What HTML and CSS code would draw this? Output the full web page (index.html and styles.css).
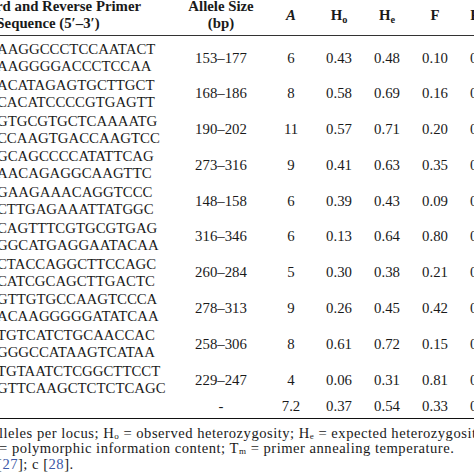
FILE: index.html
```html
<!DOCTYPE html>
<html lang="en">
<head>
<meta charset="utf-8">
<title>Microsatellite loci table</title>
<link rel="stylesheet" href="styles.css">
</head>
<body>
<div class="page">
  <div class="shift">
    <table class="tbl">
      <colgroup>
        <col class="c-seq"><col class="c-size"><col class="c-num"><col class="c-num"><col class="c-num"><col class="c-num"><col class="c-num">
      </colgroup>
      <thead>
        <tr>
          <th>Forward and Reverse Primer<br>Sequence (5′–3′)</th>
          <th>Allele Size<br>(bp)</th>
          <th><i>A</i></th>
          <th>H<sub>o</sub></th>
          <th>H<sub>e</sub></th>
          <th>F</th>
          <th>PIC</th>
        </tr>
      </thead>
      <tbody>
        <tr class="first">
          <td class="seq">AAGGCCCTCCAATACT<br>AAGGGGACCCTCCAA</td>
          <td>153–177</td><td>6</td><td>0.43</td><td>0.48</td><td>0.10</td><td>0.42</td>
        </tr>
        <tr>
          <td class="seq">ACATAGAGTGCTTGCT<br>CACATCCCCGTGAGTT</td>
          <td>168–186</td><td>8</td><td>0.58</td><td>0.69</td><td>0.16</td><td>0.64</td>
        </tr>
        <tr>
          <td class="seq">GTGCGTGCTCAAAATG<br>CCAAGTGACCAAGTCC</td>
          <td>190–202</td><td>11</td><td>0.57</td><td>0.71</td><td>0.20</td><td>0.67</td>
        </tr>
        <tr>
          <td class="seq">GCAGCCCCATATTCAG<br>AACAGAGGCAAGTTC</td>
          <td>273–316</td><td>9</td><td>0.41</td><td>0.63</td><td>0.35</td><td>0.58</td>
        </tr>
        <tr>
          <td class="seq">GAAGAAACAGGTCCC<br>CTTGAGAAATTATGGC</td>
          <td>148–158</td><td>6</td><td>0.39</td><td>0.43</td><td>0.09</td><td>0.39</td>
        </tr>
        <tr>
          <td class="seq">CAGTTTCGTGCGTGAG<br>GGCATGAGGAATACAA</td>
          <td>316–346</td><td>6</td><td>0.13</td><td>0.64</td><td>0.80</td><td>0.58</td>
        </tr>
        <tr>
          <td class="seq">CTACCAGGCTTCCAGC<br>CATCGCAGCTTGACTC</td>
          <td>260–284</td><td>5</td><td>0.30</td><td>0.38</td><td>0.21</td><td>0.35</td>
        </tr>
        <tr>
          <td class="seq">GTTGTGCCAAGTCCCA<br>ACAAGGGGGATATCAA</td>
          <td>278–313</td><td>9</td><td>0.26</td><td>0.45</td><td>0.42</td><td>0.43</td>
        </tr>
        <tr>
          <td class="seq">TGTCATCTGCAACCAC<br>GGGCCATAAGTCATAA</td>
          <td>258–306</td><td>8</td><td>0.61</td><td>0.72</td><td>0.15</td><td>0.68</td>
        </tr>
        <tr>
          <td class="seq">TGTAATCTCGGCTTCCT<br>GTTCAAGCTCTCTCAGC</td>
          <td>229–247</td><td>4</td><td>0.06</td><td>0.31</td><td>0.81</td><td>0.29</td>
        </tr>
        <tr class="mean">
          <td class="seq"></td>
          <td>-</td><td>7.2</td><td>0.37</td><td>0.54</td><td>0.33</td><td>0.50</td>
        </tr>
      </tbody>
    </table>
  </div>
  <div class="notes">
    <div class="ln l1">alleles per locus; H<sub class="fs">o</sub> = observed heterozygosity; H<sub class="fs">e</sub> = expected heterozygosity;</div>
    <div class="ln l2">= polymorphic information content; T<sub class="fs">m</sub> = primer annealing temperature.</div>
    <div class="ln l3">[<a class="ref" href="#r27">27</a>]; c [<a class="ref" href="#r28">28</a>].</div>
  </div>
</div>
</body>
</html>
```
FILE: styles.css
```css
html, body {
  margin: 0;
  padding: 0;
  background: #ffffff;
}
body {
  width: 474px;
  height: 474px;
  overflow: hidden;
}
.page {
  width: 474px;
  height: 474px;
  overflow: hidden;
  font-family: "Liberation Serif", "Times New Roman", serif;
  color: #1a1a1a;
}
.shift {
  margin-left: -79px;
  margin-top: -2px;
  width: 600px;
}
.tbl {
  border-collapse: collapse;
  table-layout: fixed;
  width: 586px;
  font-size: 14.8px;
}
.c-seq { width: 254px; }
.c-size { width: 92px; }
.c-num { width: 48px; }

.tbl th {
  font-weight: bold;
  line-height: 17px;
  padding: 0 0 3px;
  text-align: center;
  vertical-align: middle;
  white-space: nowrap;
  border-bottom: 1.5px solid #333333;
}
.tbl td {
  line-height: 17px;
  padding: 0.9px 0;
  text-align: center;
  vertical-align: middle;
  white-space: nowrap;
}
.tbl td.seq {
  text-align: left;
  padding-left: 76px;
}
.tbl tr.first td {
  padding-top: 5px;
}
.tbl tr.mean td {
  padding: 0 0 3px;
  border-bottom: 1.5px solid #111111;
}
sub {
  font-size: 0.7em;
  line-height: 0;
  vertical-align: -0.25em;
}
.notes {
  margin-top: 7px;
  font-size: 14.6px;
  letter-spacing: 0.5px;
  line-height: 15.5px;
  white-space: nowrap;
}
.notes sub.fs {
  font-size: 0.62em;
  vertical-align: -0.15em;
}
.l1 { margin-left: -8px; }
.l2 { margin-left: -1px; }
.l3 { margin-left: -3px; }
.ref {
  color: #3d5aa8;
  text-decoration: none;
}
```
